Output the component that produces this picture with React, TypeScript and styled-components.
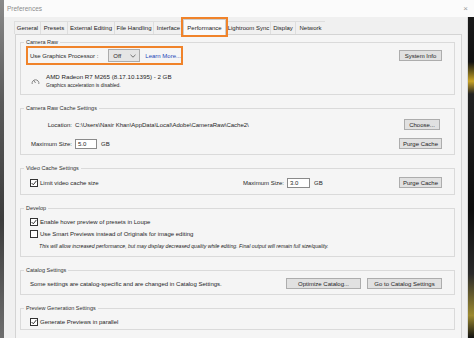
import React from 'react';
import styled, { createGlobalStyle } from 'styled-components';

const GlobalStyle = createGlobalStyle`
  html, body { margin: 0; padding: 0; background: #f0f0f0; overflow: hidden; }
  body {
    font-family: "Liberation Sans", Arial, sans-serif;
    font-size: 6px;
    color: #1e1e1e;
  }
  * { box-sizing: border-box; }
`;

const Screen = styled.div`
  display: flex;
  width: 474px;
  height: 338px;
  overflow: hidden;
`;

const BackLeft = styled.div`
  width: 4px;
  flex: none;
  background: linear-gradient(#8a8a8a, #5a5a5a 30%, #3c3c3c 65%, #6e6e6e);
`;

const Window = styled.div`
  flex: 1;
  display: flex;
  flex-direction: column;
  min-width: 0;
`;

const TitleBar = styled.div`
  height: 17px;
  flex: none;
  display: flex;
  align-items: center;
  justify-content: space-between;
  padding: 0 6px 0 3px;
  background: #fbfbfb;
  color: #8c8c8c;
  font-size: 6.5px;
`;

const Close = styled.span`
  font-size: 8px;
  color: #9a9a9a;
`;

const Body = styled.div`
  flex: 1;
  display: flex;
  min-height: 0;
`;

const BackRight = styled.div`
  width: 6px;
  flex: none;
  background: linear-gradient(#1a1a1a, #111 14%, #6a5a1a 17%, #c9a326 20%, #222 24%, #0d0d0d 60%, #2a2a2a 80%, #9c8a30 93%, #111);
`;

const Main = styled.div`
  flex: 1;
  display: flex;
  flex-direction: column;
  background: #f0f0f0;
  border-right: 1px solid #d8d8d8;
`;

const TabRow = styled.div`
  height: 17px;
  flex: none;
  display: flex;
  align-items: flex-end;
  padding-left: 10px;
`;

const Tab = styled.div<{ $w: number; $active?: boolean }>`
  width: ${p => p.$w}px;
  height: ${p => (p.$active ? 16 : 13)}px;
  margin-bottom: ${p => (p.$active ? -1 : 0)}px;
  display: flex;
  align-items: center;
  justify-content: center;
  white-space: nowrap;
  overflow: hidden;
  border: 1px solid ${p => (p.$active ? '#cdcdcd' : '#dedede')};
  border-bottom: none;
  border-right: ${p => (p.$active ? '1px solid #cdcdcd' : 'none')};
  background: ${p => (p.$active ? '#f9f9f9' : '#f0f0f0')};
  color: #222;
  position: relative;
  z-index: ${p => (p.$active ? 1 : 0)};
  outline: ${p => (p.$active ? '2px solid #f0832a' : 'none')};
`;

const Panel = styled.div`
  flex: 1;
  margin: 0 5px 0 11px;
  border: 1px solid #d4d4d4;
  border-bottom: none;
  background: #f5f5f5;
  padding: 3px 6px 0 4px;
  display: flex;
  flex-direction: column;
  gap: 9px;
`;

const Group = styled.fieldset<{ $h: number }>`
  margin: 0;
  padding: 0;
  min-width: 0;
  height: ${p => p.$h}px;
  flex: none;
  border: 1px solid #dadada;
`;

const Legend = styled.legend`
  margin-left: 3px;
  padding: 0 2px;
  font-size: 5.5px;
  line-height: 8px;
  color: #333;
`;

const Row = styled.div<{ $mt: number; $h: number; $pl?: number }>`
  display: flex;
  align-items: center;
  margin-top: ${p => p.$mt}px;
  height: ${p => p.$h}px;
  padding-left: ${p => p.$pl ?? 0}px;
  white-space: nowrap;
`;

const GpuBox = styled.div`
  display: flex;
  align-items: center;
  width: 153px;
  height: 15px;
  padding-left: 2px;
  outline: 2px solid #f0832a;
`;

const Select = styled.div`
  width: 34px;
  height: 13px;
  margin-left: 10px;
  display: flex;
  align-items: center;
  justify-content: space-between;
  padding: 0 3px 0 4px;
  background: #e5e5e5;
  border: 1px solid #ababab;
`;

const Link = styled.span`
  margin-left: 5px;
  color: #2448b8;
`;

const Button = styled.div<{ $w: number; $mr?: number; $ml?: string }>`
  width: ${p => p.$w}px;
  height: 11px;
  flex: none;
  margin-left: ${p => p.$ml ?? '0'};
  margin-right: ${p => p.$mr ?? 0}px;
  display: flex;
  align-items: center;
  justify-content: center;
  background: #e1e1e1;
  border: 1px solid #adadad;
  color: #1e1e1e;
`;

const InfoRow = styled.div`
  display: flex;
  align-items: flex-start;
  margin-top: 9px;
  padding-left: 10px;
`;

const Gauge = styled.svg`
  margin-top: 5px;
  flex: none;
`;

const InfoText = styled.div`
  margin-left: 6px;
`;

const InfoLine = styled.div<{ $small?: boolean }>`
  font-size: ${p => (p.$small ? 5 : 6.2)}px;
  line-height: 9px;
`;

const FieldLabel = styled.span<{ $w?: number }>`
  width: ${p => (p.$w ? `${p.$w}px` : 'auto')};
  text-align: right;
  margin-right: 3px;
  flex: none;
`;

const Input = styled.div<{ $w: number }>`
  width: ${p => p.$w}px;
  height: 10px;
  display: flex;
  align-items: center;
  padding-left: 2px;
  margin-right: 4px;
  background: #fff;
  border: 1px solid #8a8a8a;
`;

const CheckItem = styled.div<{ $grow?: boolean }>`
  display: flex;
  align-items: center;
  flex: ${p => (p.$grow ? 1 : 'none')};
`;

const Box = styled.span`
  width: 8px;
  height: 8px;
  flex: none;
  display: flex;
  align-items: center;
  justify-content: center;
  background: #fff;
  border: 1px solid #333;
  margin-right: 2px;
`;

const SizeField = styled.div`
  width: 156px;
  display: flex;
  align-items: center;
`;

const Note = styled.div`
  margin-top: 4px;
  padding-left: 18px;
  font-size: 5.2px;
  line-height: 8px;
  font-style: italic;
  white-space: nowrap;
`;

const tabs = [
  { label: 'General', w: 26 },
  { label: 'Presets', w: 27 },
  { label: 'External Editing', w: 47 },
  { label: 'File Handling', w: 39 },
  { label: 'Interface', w: 30 },
  { label: 'Performance', w: 43, active: true },
  { label: 'Lightroom Sync', w: 44 },
  { label: 'Display', w: 25 },
  { label: 'Network', w: 30 },
];

const Check = ({ on }: { on: boolean }) => (
  <Box>
    {on && (
      <svg width="6" height="6" viewBox="0 0 6 6">
        <polyline points="0.6,3 2.3,4.8 5.4,0.9" fill="none" stroke="#222" strokeWidth="0.9" />
      </svg>
    )}
  </Box>
);

const CheckField = ({ on, label, grow }: { on: boolean; label: string; grow?: boolean }) => (
  <CheckItem $grow={grow}>
    <Check on={on} />
    <span>{label}</span>
  </CheckItem>
);

export default function App() {
  return (
    <>
      <GlobalStyle />
      <Screen>
        <BackLeft />
        <Window>
          <TitleBar>
            <span>Preferences</span>
            <Close>×</Close>
          </TitleBar>
          <Body>
            <Main>
              <TabRow>
                {tabs.map(t => (
                  <Tab key={t.label} $w={t.w} $active={t.active}>
                    {t.label}
                  </Tab>
                ))}
              </TabRow>
              <Panel>
                <Group $h={57}>
                  <Legend>Camera Raw</Legend>
                  <Row $mt={2} $h={15} $pl={7}>
                    <GpuBox>
                      <span>Use Graphics Processor :</span>
                      <Select>
                        <span>Off</span>
                        <svg width="6" height="4" viewBox="0 0 6 4">
                          <polyline points="0.5,0.8 3,3.2 5.5,0.8" fill="none" stroke="#555" strokeWidth="0.8" />
                        </svg>
                      </Select>
                      <Link>Learn More...</Link>
                    </GpuBox>
                    <Button $w={43} $mr={12} $ml="auto">System Info</Button>
                  </Row>
                  <InfoRow>
                    <Gauge width="9" height="8" viewBox="0 0 9 8">
                      <path d="M1.2 7 A3.4 3.4 0 1 1 7.8 7" fill="none" stroke="#7a7a7a" strokeWidth="0.9" />
                      <line x1="4.5" y1="6" x2="3" y2="3.6" stroke="#7a7a7a" strokeWidth="0.9" />
                    </Gauge>
                    <InfoText>
                      <InfoLine>AMD Radeon R7 M265 (8.17.10.1395) - 2 GB</InfoLine>
                      <InfoLine $small>Graphics acceleration is disabled.</InfoLine>
                    </InfoText>
                  </InfoRow>
                </Group>

                <Group $h={51}>
                  <Legend>Camera Raw Cache Settings</Legend>
                  <Row $mt={7} $h={11}>
                    <FieldLabel $w={51}>Location:</FieldLabel>
                    <span>C:\Users\Nasir Khan\AppData\Local\Adobe\CameraRaw\Cache2\</span>
                    <Button $w={36} $mr={14} $ml="auto">Choose...</Button>
                  </Row>
                  <Row $mt={8} $h={11}>
                    <FieldLabel $w={51}>Maximum Size:</FieldLabel>
                    <Input $w={22}>5.0</Input>
                    <span>GB</span>
                    <Button $w={43} $mr={12} $ml="auto">Purge Cache</Button>
                  </Row>
                </Group>

                <Group $h={31}>
                  <Legend>Video Cache Settings</Legend>
                  <Row $mt={5} $h={11} $pl={9}>
                    <CheckField on label="Limit video cache size" grow />
                    <SizeField>
                      <FieldLabel>Maximum Size:</FieldLabel>
                      <Input $w={23}>3.0</Input>
                      <span>GB</span>
                    </SizeField>
                    <Button $w={43} $mr={12}>Purge Cache</Button>
                  </Row>
                </Group>

                <Group $h={53}>
                  <Legend>Develop</Legend>
                  <Row $mt={5} $h={9} $pl={9}>
                    <CheckField on label="Enable hover preview of presets in Loupe" />
                  </Row>
                  <Row $mt={3} $h={9} $pl={9}>
                    <CheckField on={false} label="Use Smart Previews instead of Originals for image editing" />
                  </Row>
                  <Note>
                    This will allow increased performance, but may display decreased quality while editing. Final output will remain full size/quality.
                  </Note>
                </Group>

                <Group $h={29}>
                  <Legend>Catalog Settings</Legend>
                  <Row $mt={4} $h={11} $pl={9}>
                    <span>Some settings are catalog-specific and are changed in Catalog Settings.</span>
                    <Button $w={75} $ml="auto">Optimize Catalog...</Button>
                    <Button $w={75} $ml="6px" $mr={12}>Go to Catalog Settings</Button>
                  </Row>
                </Group>

                <Group $h={26}>
                  <Legend>Preview Generation Settings</Legend>
                  <Row $mt={5} $h={9} $pl={9}>
                    <CheckField on label="Generate Previews in parallel" />
                  </Row>
                </Group>
              </Panel>
            </Main>
            <BackRight />
          </Body>
        </Window>
      </Screen>
    </>
  );
}
